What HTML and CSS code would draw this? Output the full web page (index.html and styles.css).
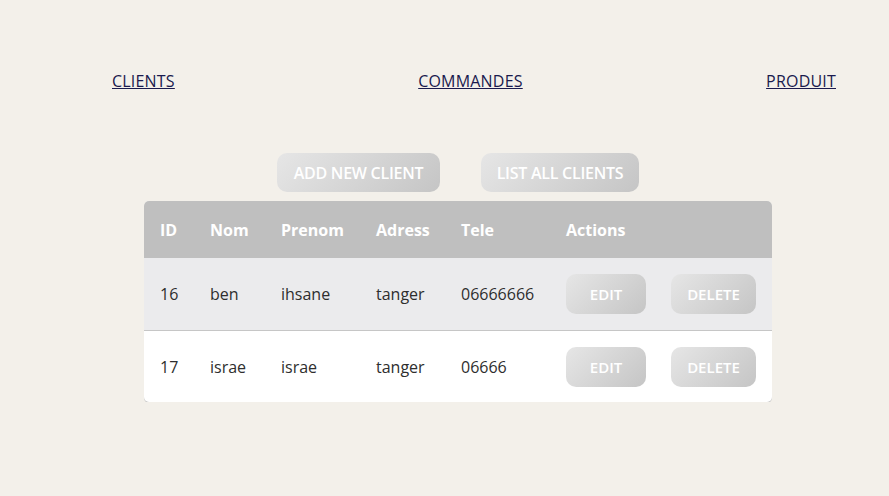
FILE: index.html
```html
<!DOCTYPE html>
<html lang="fr">
<head>
<meta charset="utf-8">
<title>Clients</title>
<link rel="stylesheet" href="styles.css">
</head>
<body>
<nav class="nav">
  <a href="#" class="nav-link">CLIENTS</a>
  <a href="#" class="nav-link">COMMANDES</a>
  <a href="#" class="nav-link">PRODUIT</a>
</nav>
<main class="main">
  <div class="toolbar">
    <button class="btn btn-top btn-add">ADD NEW CLIENT</button>
    <button class="btn btn-top btn-list">LIST ALL CLIENTS</button>
  </div>
  <table class="table">
    <colgroup>
      <col class="c-id"><col class="c-nom"><col class="c-prenom"><col class="c-adress"><col class="c-tele"><col class="c-act"><col class="c-del">
    </colgroup>
    <thead>
      <tr><th>ID</th><th>Nom</th><th>Prenom</th><th>Adress</th><th>Tele</th><th colspan="2">Actions</th></tr>
    </thead>
    <tbody>
      <tr class="row-alt">
        <td>16</td><td>ben</td><td>ihsane</td><td>tanger</td><td>06666666</td>
        <td><button class="btn btn-edit">EDIT</button></td>
        <td><button class="btn btn-del">DELETE</button></td>
      </tr>
      <tr class="row-last">
        <td>17</td><td>israe</td><td>israe</td><td>tanger</td><td>06666</td>
        <td><button class="btn btn-edit">EDIT</button></td>
        <td><button class="btn btn-del">DELETE</button></td>
      </tr>
    </tbody>
  </table>
</main>
</body>
</html>
```
FILE: styles.css
```css
* { box-sizing: border-box; }
body {
  margin: 0;
  background: #f3f0ea;
  font-family: "Open Sans", "Liberation Sans", sans-serif;
  color: #2e2e2e;
}
.nav {
  display: flex;
  justify-content: space-between;
  padding: 69px 53px 0 112px;
  line-height: 24px;
}
.nav-link {
  font-size: 16px;
  letter-spacing: 0.2px;
  color: #1a1a4e;
  text-decoration: underline;
}
.main {
  width: 628px;
  margin: 60px 0 0 144px;
}
.toolbar {
  display: flex;
  justify-content: center;
  gap: 41px;
  margin-bottom: 9px;
}
.btn {
  border: none;
  font-family: "Open Sans", "Liberation Sans", sans-serif;
  font-weight: 600;
  font-size: 16px;
  color: #fff;
  background: linear-gradient(135deg, #e6e6e6, #c5c5c5);
  border-radius: 10px;
  padding: 0;
  cursor: pointer;
}
.btn-top { height: 39px; letter-spacing: -0.25px; }
.btn-add { width: 163px; }
.btn-list { width: 158px; }
.btn-edit { width: 80px; height: 40px; font-size: 15px; }
.btn-del { width: 85px; height: 40px; font-size: 15px; }
.table {
  width: 628px;
  border-collapse: separate;
  border-spacing: 0;
  border-radius: 5px;
  overflow: hidden;
  table-layout: fixed;
  background: #fff;
  box-shadow: 0 1px 0 #c6c6c6;
}
.c-id { width: 50px; }
.c-nom { width: 71px; }
.c-prenom { width: 95px; }
.c-adress { width: 85px; }
.c-tele { width: 105px; }
.c-act { width: 105px; }
.c-del { width: 117px; }
th {
  background: #bfbfbf;
  color: #fff;
  font-weight: 700;
  font-size: 16px;
  text-align: left;
  height: 57px;
  padding: 0 0 0 16px;
}
td {
  font-size: 16px;
  height: 73px;
  padding: 0 0 0 16px;
  border-bottom: 1px solid #c6c6c6;
  vertical-align: middle;
}
.row-last td { height: 71px; border-bottom: none; }
.row-alt td { background: #ebebed; }
```
